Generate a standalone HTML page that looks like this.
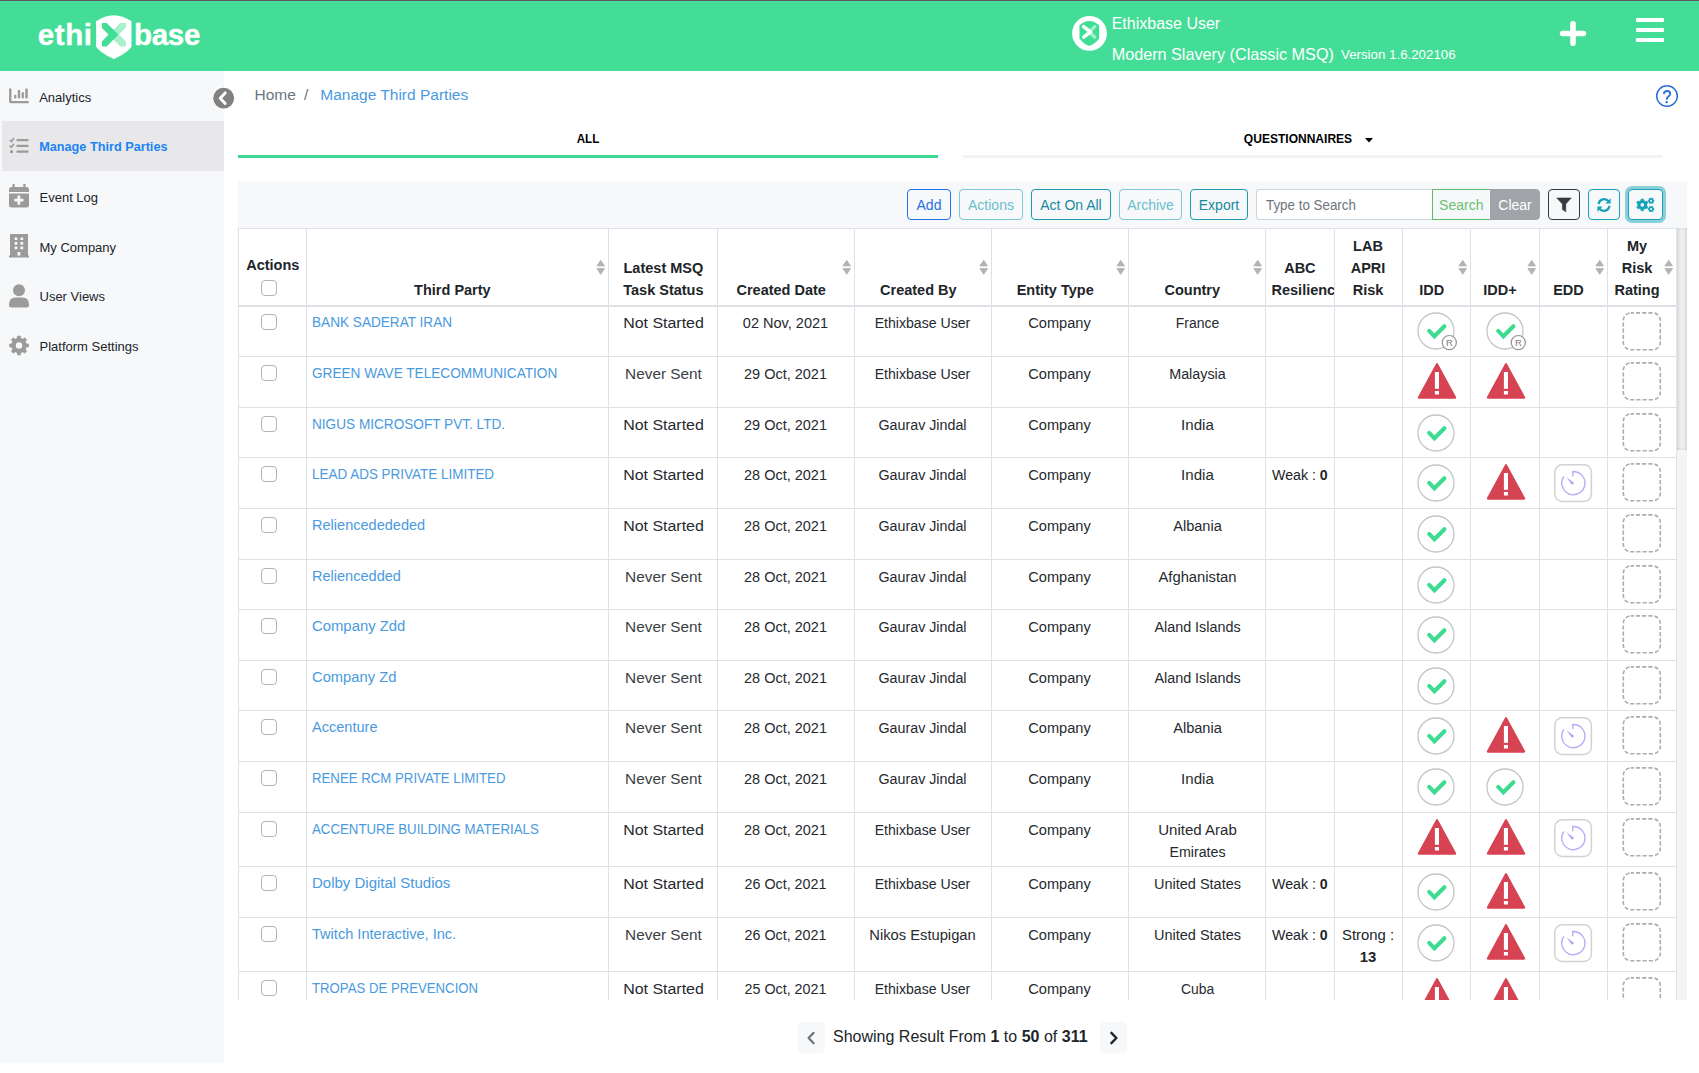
<!DOCTYPE html>
<html><head><meta charset="utf-8"><title>Manage Third Parties</title>
<style>
html,body{margin:0;padding:0;}
body{width:1699px;height:1073px;overflow:hidden;position:relative;background:#fff;font-family:"Liberation Sans", sans-serif;}
.t{position:absolute;white-space:nowrap;}
svg{overflow:visible}
</style></head><body>
<div style="position:absolute;left:0px;top:0px;width:1699px;height:1px;background:#615462"></div>
<div style="position:absolute;left:0px;top:1px;width:1699px;height:70px;background:#44dd97"></div>
<div style="position:absolute;left:0px;top:1px;width:1699px;height:1px;background:#42e59b"></div>
<div class="t" style="left:37.80px;top:14.88px;font-size:29.5px;font-weight:700;color:#fff;line-height:40px;letter-spacing:0.6px;-webkit-text-stroke:0.4px #fff;">ethi</div>
<div class="t" style="left:134.00px;top:14.88px;font-size:29.5px;font-weight:700;color:#fff;line-height:40px;letter-spacing:-0.3px;-webkit-text-stroke:0.4px #fff;">base</div>
<svg style="position:absolute;left:94px;top:12px;" width="40" height="50" viewBox="0 0 40 50">
<path d="M2.1 9.3 Q19.8 -2.7 37.5 9.3 L37.5 34.5 Q35 40 19.8 47.1 Q4.6 40 2.1 34.5 Z" fill="#fff"/>
<path d="M26.3 11 L31.9 11 L31.9 15.4 L24.9 22.6 L31.9 29.4 L31.9 34.5 L26.3 34.5 L14.5 22.6 Z" fill="#a9f0cd"/>
<path d="M7.9 11 L12.6 11 L24.5 22.6 L12.6 34.5 L7.9 34.5 L7.9 29.4 L14.5 22.6 L7.9 15.9 Z" fill="#44dd97"/>
</svg>
<svg style="position:absolute;left:1070px;top:14px;" width="40" height="40" viewBox="0 0 40 40">
<circle cx="19.5" cy="19.4" r="17.4" fill="#fff"/>
<path d="M9.5 11.2 Q19.3 2.6 29.1 11.2 L29.1 24.3 Q26 29.5 19.2 31.9 Q12.4 29.5 9.5 24.3 Z" fill="#3fde95"/>
<path d="M24.8 12.6 L15.2 22 M15.6 14.2 L24.8 23.2" stroke="#a0f0d2" stroke-width="3.3" stroke-linecap="round"/>
<path d="M13.6 12.6 L20.8 18 L13.6 23.2" stroke="#fff" stroke-width="3.3" stroke-linecap="round" stroke-linejoin="round" fill="none"/>
</svg>
<div class="t" style="left:1111.70px;top:12.86px;font-size:16px;font-weight:400;color:#fff;line-height:22px;">Ethixbase User</div>
<div class="t" style="left:1111.70px;top:42.59px;font-size:16.2px;font-weight:400;color:#fff;line-height:22px;">Modern Slavery (Classic MSQ)</div>
<div class="t" style="left:1341.00px;top:43.59px;font-size:13.3px;font-weight:400;color:#fff;line-height:22px;">Version 1.6.202106</div>
<svg style="position:absolute;left:1559px;top:20px;" width="28" height="27" viewBox="0 0 28 27"><path d="M14 3.7 V23.3 M3.6 13.5 H24.4" stroke="#fff" stroke-width="5.6" stroke-linecap="round"/></svg>
<div style="position:absolute;left:1636px;top:18px;width:28px;height:4px;background:#fff;border-radius:1px"></div>
<div style="position:absolute;left:1636px;top:28px;width:28px;height:4px;background:#fff;border-radius:1px"></div>
<div style="position:absolute;left:1636px;top:38px;width:28px;height:4px;background:#fff;border-radius:1px"></div>
<div style="position:absolute;left:0px;top:71px;width:224px;height:992px;background:#f7f8fa"></div>
<div style="position:absolute;left:2px;top:121px;width:222px;height:49.5px;background:#e8e8ea"></div>
<svg style="position:absolute;left:9px;top:88px;" width="21" height="17" viewBox="0 0 21 17">
<path d="M1.25 1.4 V13.6 Q1.25 14.1 1.75 14.1 H18.8" stroke="#9b9b9b" stroke-width="2.4" fill="none" stroke-linecap="round"/>
<rect x="5" y="6.7" width="2.4" height="3.7" rx="1" fill="#9b9b9b"/>
<rect x="8.8" y="1.8" width="2.3" height="8.6" rx="1" fill="#9b9b9b"/>
<rect x="12.6" y="4.1" width="2.3" height="6.3" rx="1" fill="#9b9b9b"/>
<rect x="16.2" y="0.5" width="2.6" height="9.9" rx="1" fill="#9b9b9b"/>
</svg>
<div class="t" style="left:39.20px;top:87.50px;font-size:13px;font-weight:400;color:#212529;line-height:20px;">Analytics</div>
<svg style="position:absolute;left:9px;top:137px;" width="20" height="17" viewBox="0 0 20 17">
<path d="M0.8 3 L2.4 4.6 L5 1.2" stroke="#9b9b9b" stroke-width="1.6" fill="none"/>
<path d="M0.8 8.6 L2.4 10.2 L5 6.8" stroke="#9b9b9b" stroke-width="1.6" fill="none"/>
<circle cx="2.5" cy="14.7" r="1.6" fill="#9b9b9b"/>
<rect x="7.5" y="2" width="12" height="2.2" rx="0.6" fill="#9b9b9b"/>
<rect x="7.5" y="7.8" width="12" height="2.2" rx="0.6" fill="#9b9b9b"/>
<rect x="7.5" y="13.6" width="12" height="2.2" rx="0.6" fill="#9b9b9b"/>
</svg>
<div class="t" style="left:39.20px;top:137.00px;font-size:12.7px;font-weight:700;color:#1c84f2;line-height:20px;">Manage Third Parties</div>
<svg style="position:absolute;left:9px;top:184px;" width="20" height="24" viewBox="0 0 20 24">
<rect x="3.5" y="0" width="2.2" height="4" fill="#9b9b9b"/>
<rect x="14.3" y="0" width="2.2" height="4" fill="#9b9b9b"/>
<path d="M0 5.5 Q0 3 2.5 3 H17.5 Q20 3 20 5.5 V8 H0 Z" fill="#9b9b9b"/>
<path d="M0 9.5 H20 V21 Q20 23.5 17.5 23.5 H2.5 Q0 23.5 0 21 Z" fill="#9b9b9b"/>
<path d="M9.9 11.6 V20.8 M5.3 16.2 H14.5" stroke="#f7f8fa" stroke-width="2.7"/>
</svg>
<div class="t" style="left:39.50px;top:187.50px;font-size:13px;font-weight:400;color:#212529;line-height:20px;">Event Log</div>
<svg style="position:absolute;left:9px;top:234px;" width="20" height="24" viewBox="0 0 20 24">
<path d="M1 0 H19 V21.5 H20 V23.5 H0 V21.5 H1 Z" fill="#9b9b9b"/>
<rect x="5.6" y="3.4" width="2.8" height="2.7" rx="0.5" fill="#f7f8fa"/><rect x="11.4" y="3.4" width="2.8" height="2.7" rx="0.5" fill="#f7f8fa"/>
<rect x="5.6" y="8" width="2.8" height="2.7" rx="0.5" fill="#f7f8fa"/><rect x="11.4" y="8" width="2.8" height="2.7" rx="0.5" fill="#f7f8fa"/>
<rect x="5.6" y="12.5" width="2.8" height="2.7" rx="0.5" fill="#f7f8fa"/><rect x="11.4" y="12.5" width="2.8" height="2.7" rx="0.5" fill="#f7f8fa"/>
<rect x="8.5" y="18" width="2.8" height="3.6" fill="#f7f8fa"/>
</svg>
<div class="t" style="left:39.50px;top:237.50px;font-size:13px;font-weight:400;color:#212529;line-height:20px;">My Company</div>
<svg style="position:absolute;left:9px;top:284px;" width="20" height="24" viewBox="0 0 20 24">
<circle cx="10" cy="6.2" r="6" fill="#9b9b9b"/>
<path d="M0 20.5 Q0 13.5 6.5 13.5 H13.5 Q20 13.5 20 20.5 V21 Q20 23.5 17.5 23.5 H2.5 Q0 23.5 0 21 Z" fill="#9b9b9b"/>
</svg>
<div class="t" style="left:39.50px;top:286.80px;font-size:13px;font-weight:400;color:#212529;line-height:20px;">User Views</div>
<svg style="position:absolute;left:9px;top:335px;" width="21" height="21" viewBox="0 0 21 21"><path d="M17.19 8.74 L19.49 9.08 L19.49 11.92 L17.19 12.26 L16.33 14.34 L17.72 16.21 L15.71 18.22 L13.84 16.83 L11.76 17.69 L11.42 19.99 L8.58 19.99 L8.24 17.69 L6.16 16.83 L4.29 18.22 L2.28 16.21 L3.67 14.34 L2.81 12.26 L0.51 11.92 L0.51 9.08 L2.81 8.74 L3.67 6.66 L2.28 4.79 L4.29 2.78 L6.16 4.17 L8.24 3.31 L8.58 1.01 L11.42 1.01 L11.76 3.31 L13.84 4.17 L15.71 2.78 L17.72 4.79 L16.33 6.66 Z" fill="#9b9b9b" stroke="#9b9b9b" stroke-width="0.6" stroke-linejoin="round"/><circle cx="10" cy="10.5" r="7.252" fill="#9b9b9b"/><circle cx="10" cy="10.5" r="3.2" fill="#f7f8fa"/></svg>
<div class="t" style="left:39.50px;top:337.10px;font-size:13px;font-weight:400;color:#212529;line-height:20px;">Platform Settings</div>
<svg style="position:absolute;left:212.7px;top:86.6px;" width="22" height="22" viewBox="0 0 22 22"><circle cx="10.7" cy="11.2" r="10.4" fill="#818181"/><path d="M12.2 5.9 L7.2 11.2 L12.2 16.5" stroke="#fff" stroke-width="2.9" fill="none" stroke-linecap="round" stroke-linejoin="round"/></svg>
<div class="t" style="left:254.50px;top:84.33px;font-size:15.5px;font-weight:400;color:#6c757d;line-height:22px;">Home</div>
<div class="t" style="left:304.00px;top:84.33px;font-size:15.5px;font-weight:400;color:#6c757d;line-height:22px;">/</div>
<div class="t" style="left:320.30px;top:84.33px;font-size:15.5px;font-weight:400;color:#4a9ae0;line-height:22px;">Manage Third Parties</div>
<svg style="position:absolute;left:1655px;top:84px;" width="24" height="24" viewBox="0 0 24 24"><circle cx="12" cy="12" r="10.3" stroke="#2f6fd6" stroke-width="1.5" fill="none"/><path d="M8.7 10 Q9.2 7 12.2 7 Q15.2 7 15.2 9.7 Q15.2 11.2 13.4 12.5 Q11.6 13.9 11.6 15.8" stroke="#2f6fd6" stroke-width="1.8" fill="none"/><rect x="10.6" y="17.1" width="2.1" height="2.1" fill="#2f6fd6"/></svg>
<div class="t" style="left:538.00px;width:100px;text-align:center;transform:scaleX(0.8552);transform-origin:50% 0;top:128.99px;font-size:13.6px;font-weight:700;color:#000;line-height:20px;">ALL</div>
<div style="position:absolute;left:238px;top:155px;width:700px;height:3px;background:#3dd993"></div>
<div class="t" style="left:1217.50px;width:160px;text-align:center;transform:scaleX(0.8850);transform-origin:50% 0;top:128.99px;font-size:13.6px;font-weight:700;color:#000;line-height:20px;">QUESTIONNAIRES</div>
<svg style="position:absolute;left:1365px;top:137.5px;" width="9" height="5" viewBox="0 0 9 5"><path d="M0 0 H8 L4 4.5 Z" fill="#000"/></svg>
<div style="position:absolute;left:963px;top:155px;width:698.5px;height:3px;background:#f3f3f3"></div>
<div style="position:absolute;left:238px;top:181px;width:1449px;height:47px;background:#f7f8fa"></div>
<div style="position:absolute;left:907px;top:189px;width:44px;height:30.6px;box-sizing:border-box;border:1.3px solid #1c74ec;border-radius:4px;background:transparent;color:#2a70e2;font-size:14px;line-height:30px;text-align:center;">Add</div>
<div style="position:absolute;left:959px;top:189px;width:64px;height:30.6px;box-sizing:border-box;border:1.3px solid #7cc8d3;border-radius:4px;background:transparent;color:#6bbfcb;font-size:14px;line-height:30px;text-align:center;">Actions</div>
<div style="position:absolute;left:1031px;top:189px;width:80px;height:30.6px;box-sizing:border-box;border:1.3px solid #1a9db2;border-radius:4px;background:transparent;color:#178aa0;font-size:14px;line-height:30px;text-align:center;">Act On All</div>
<div style="position:absolute;left:1119px;top:189px;width:63px;height:30.6px;box-sizing:border-box;border:1.3px solid #7cc8d3;border-radius:4px;background:transparent;color:#6bbfcb;font-size:14px;line-height:30px;text-align:center;">Archive</div>
<div style="position:absolute;left:1190px;top:189px;width:58px;height:30.6px;box-sizing:border-box;border:1.3px solid #1a9db2;border-radius:4px;background:transparent;color:#178aa0;font-size:14px;line-height:30px;text-align:center;">Export</div>
<div style="position:absolute;left:1256px;top:189px;width:177px;height:30.6px;box-sizing:border-box;border:1.2px solid #ced4da;border-right:none;border-radius:4px 0 0 4px;background:#fff;color:#6c757d;font-size:14px;line-height:30px;padding-left:9px"><span style="display:inline-block;transform:scaleX(0.955);transform-origin:0 0">Type to Search</span></div>
<div style="position:absolute;left:1432px;top:189px;width:58.5px;height:30.6px;box-sizing:border-box;border:1.3px solid #5cbd6a;border-radius:0;background:transparent;color:#6cc070;font-size:14px;line-height:30px;text-align:center;">Search</div>
<div style="position:absolute;left:1490.4px;top:189px;width:49.3px;height:30.6px;box-sizing:border-box;border:1.3px solid #a0a4a8;border-radius:0 4px 4px 0;background:#a0a4a8;color:#fff;font-size:14px;line-height:30px;text-align:center;">Clear</div>
<div style="position:absolute;left:1548px;top:189px;width:32px;height:30.6px;box-sizing:border-box;border:1.3px solid #343a40;border-radius:4px"></div>
<svg style="position:absolute;left:1556px;top:197px;" width="16" height="16" viewBox="0 0 16 16"><path d="M0.8 1 H15.2 L9.8 7 V14.8 L6.4 12.5 V7 Z" fill="#343a40" stroke="#343a40" stroke-width="0.6" stroke-linejoin="round"/></svg>
<div style="position:absolute;left:1588px;top:189px;width:32px;height:30.6px;box-sizing:border-box;border:1.3px solid #17a2b8;border-radius:4px"></div>
<svg style="position:absolute;left:1596px;top:197px;" width="16" height="16" viewBox="0 0 16 16"><path d="M2.6 7.2 A5.6 5.6 0 0 1 12.6 4.3" stroke="#17a2b8" stroke-width="2.2" fill="none"/><path d="M14.6 1.2 V6.6 H9.4 Z" fill="#17a2b8"/>
<path d="M13.4 8.8 A5.6 5.6 0 0 1 3.4 11.7" stroke="#17a2b8" stroke-width="2.2" fill="none"/><path d="M1.4 14.8 V9.4 H6.6 Z" fill="#17a2b8"/></svg>
<div style="position:absolute;left:1625px;top:186px;width:41px;height:36.8px;box-sizing:border-box;border-radius:7px;background:#8bcfdb"></div>
<div style="position:absolute;left:1628px;top:189px;width:34.5px;height:30.6px;box-sizing:border-box;border:1.3px solid #17a2b8;border-radius:4px;background:#f7f8fa"></div>
<svg style="position:absolute;left:1634px;top:196px;" width="24" height="18" viewBox="0 0 24 18"><g transform="rotate(-90 8.3 8.9)"><path d="M12.69 7.54 L14.20 7.79 L14.20 10.01 L12.69 10.26 L11.67 12.03 L12.21 13.45 L10.29 14.56 L9.32 13.39 L7.28 13.39 L6.31 14.56 L4.39 13.45 L4.93 12.03 L3.91 10.26 L2.40 10.01 L2.40 7.79 L3.91 7.54 L4.93 5.77 L4.39 4.35 L6.31 3.24 L7.28 4.41 L9.32 4.41 L10.29 3.24 L12.21 4.35 L11.67 5.77 Z" fill="#17a2b8" stroke="#17a2b8" stroke-width="0.6" stroke-linejoin="round"/><circle cx="8.3" cy="8.9" r="4.508" fill="#17a2b8"/><circle cx="8.3" cy="8.9" r="1.8" fill="#f7f8fa"/></g><path d="M19.25 3.99 L20.03 4.14 L20.03 5.46 L19.25 5.61 L18.88 6.26 L19.14 7.00 L17.99 7.67 L17.47 7.07 L16.73 7.07 L16.21 7.67 L15.06 7.00 L15.32 6.26 L14.95 5.61 L14.17 5.46 L14.17 4.14 L14.95 3.99 L15.32 3.34 L15.06 2.60 L16.21 1.93 L16.73 2.53 L17.47 2.53 L17.99 1.93 L19.14 2.60 L18.88 3.34 Z" fill="#17a2b8" stroke="#17a2b8" stroke-width="0.6" stroke-linejoin="round"/><circle cx="17.1" cy="4.8" r="2.254" fill="#17a2b8"/><circle cx="17.1" cy="4.8" r="1.0" fill="#f7f8fa"/><path d="M19.25 12.19 L20.03 12.34 L20.03 13.66 L19.25 13.81 L18.88 14.46 L19.14 15.20 L17.99 15.87 L17.47 15.27 L16.73 15.27 L16.21 15.87 L15.06 15.20 L15.32 14.46 L14.95 13.81 L14.17 13.66 L14.17 12.34 L14.95 12.19 L15.32 11.54 L15.06 10.80 L16.21 10.13 L16.73 10.73 L17.47 10.73 L17.99 10.13 L19.14 10.80 L18.88 11.54 Z" fill="#17a2b8" stroke="#17a2b8" stroke-width="0.6" stroke-linejoin="round"/><circle cx="17.1" cy="13.0" r="2.254" fill="#17a2b8"/><circle cx="17.1" cy="13.0" r="1.0" fill="#f7f8fa"/></svg>
<div style="position:absolute;left:238px;top:228px;width:1449px;height:772px;overflow:hidden">
<div style="position:absolute;left:0.00px;top:0.00px;width:1438px;height:772px;background:#fff"></div>
<div style="position:absolute;left:0.00px;top:0.00px;width:1438px;height:1px;background:#dee2e6"></div>
<div style="position:absolute;left:0.00px;top:77.00px;width:1438px;height:2px;background:#dee2e6"></div>
<div style="position:absolute;left:0.00px;top:128.00px;width:1438px;height:1px;background:#dee2e6"></div>
<div style="position:absolute;left:0.00px;top:179.00px;width:1438px;height:1px;background:#dee2e6"></div>
<div style="position:absolute;left:0.00px;top:229.00px;width:1438px;height:1px;background:#dee2e6"></div>
<div style="position:absolute;left:0.00px;top:280.00px;width:1438px;height:1px;background:#dee2e6"></div>
<div style="position:absolute;left:0.00px;top:331.00px;width:1438px;height:1px;background:#dee2e6"></div>
<div style="position:absolute;left:0.00px;top:381.00px;width:1438px;height:1px;background:#dee2e6"></div>
<div style="position:absolute;left:0.00px;top:432.00px;width:1438px;height:1px;background:#dee2e6"></div>
<div style="position:absolute;left:0.00px;top:482.00px;width:1438px;height:1px;background:#dee2e6"></div>
<div style="position:absolute;left:0.00px;top:533.00px;width:1438px;height:1px;background:#dee2e6"></div>
<div style="position:absolute;left:0.00px;top:584.00px;width:1438px;height:1px;background:#dee2e6"></div>
<div style="position:absolute;left:0.00px;top:638.00px;width:1438px;height:1px;background:#dee2e6"></div>
<div style="position:absolute;left:0.00px;top:689.00px;width:1438px;height:1px;background:#dee2e6"></div>
<div style="position:absolute;left:0.00px;top:743.00px;width:1438px;height:1px;background:#dee2e6"></div>
<div style="position:absolute;left:0.00px;top:0.00px;width:1px;height:772px;background:#dee2e6"></div>
<div style="position:absolute;left:68.00px;top:0.00px;width:1px;height:772px;background:#dee2e6"></div>
<div style="position:absolute;left:370.00px;top:0.00px;width:1px;height:772px;background:#dee2e6"></div>
<div style="position:absolute;left:479.00px;top:0.00px;width:1px;height:772px;background:#dee2e6"></div>
<div style="position:absolute;left:616.00px;top:0.00px;width:1px;height:772px;background:#dee2e6"></div>
<div style="position:absolute;left:753.00px;top:0.00px;width:1px;height:772px;background:#dee2e6"></div>
<div style="position:absolute;left:890.00px;top:0.00px;width:1px;height:772px;background:#dee2e6"></div>
<div style="position:absolute;left:1027.00px;top:0.00px;width:1px;height:772px;background:#dee2e6"></div>
<div style="position:absolute;left:1096.00px;top:0.00px;width:1px;height:772px;background:#dee2e6"></div>
<div style="position:absolute;left:1164.00px;top:0.00px;width:1px;height:772px;background:#dee2e6"></div>
<div style="position:absolute;left:1232.00px;top:0.00px;width:1px;height:772px;background:#dee2e6"></div>
<div style="position:absolute;left:1301.00px;top:0.00px;width:1px;height:772px;background:#dee2e6"></div>
<div style="position:absolute;left:1369.00px;top:0.00px;width:1px;height:772px;background:#dee2e6"></div>
<div class="t" style="left:-5.20px;width:80px;text-align:center;top:25.88px;font-size:14.5px;font-weight:700;color:#212529;line-height:22px;">Actions</div>
<div style="position:absolute;left:23.00px;top:52.00px;width:16px;height:16px;box-sizing:border-box;border:1.2px solid #adb5bd;border-radius:4px;background:#fff"></div>
<div class="t" style="left:114.40px;width:200px;text-align:center;top:50.58px;font-size:14.5px;font-weight:700;color:#212529;line-height:22px;">Third Party</div>
<div class="t" style="left:370.90px;width:109px;text-align:center;top:28.78px;font-size:14.5px;font-weight:700;color:#212529;line-height:22px;">Latest MSQ</div>
<div class="t" style="left:370.90px;width:109px;text-align:center;top:50.58px;font-size:14.5px;font-weight:700;color:#212529;line-height:22px;">Task Status</div>
<div class="t" style="left:474.70px;width:137px;text-align:center;top:50.58px;font-size:14.5px;font-weight:700;color:#212529;line-height:22px;">Created Date</div>
<div class="t" style="left:611.80px;width:137px;text-align:center;top:50.58px;font-size:14.5px;font-weight:700;color:#212529;line-height:22px;">Created By</div>
<div class="t" style="left:748.70px;width:137px;text-align:center;top:50.58px;font-size:14.5px;font-weight:700;color:#212529;line-height:22px;">Entity Type</div>
<div class="t" style="left:885.80px;width:137px;text-align:center;top:50.58px;font-size:14.5px;font-weight:700;color:#212529;line-height:22px;">Country</div>
<div class="t" style="left:1027.40px;width:69px;text-align:center;top:28.78px;font-size:14.5px;font-weight:700;color:#212529;line-height:22px;">ABC</div>
<div style="position:absolute;left:1028px;top:50.58px;width:68px;overflow:hidden;white-space:nowrap;font-size:14.5px;font-weight:700;color:#212529;line-height:22px;padding-left:5.5px;box-sizing:border-box">Resilience</div>
<div class="t" style="left:1096.00px;width:68px;text-align:center;top:6.78px;font-size:14.5px;font-weight:700;color:#212529;line-height:22px;">LAB</div>
<div class="t" style="left:1096.00px;width:68px;text-align:center;top:28.78px;font-size:14.5px;font-weight:700;color:#212529;line-height:22px;">APRI</div>
<div class="t" style="left:1096.00px;width:68px;text-align:center;top:50.58px;font-size:14.5px;font-weight:700;color:#212529;line-height:22px;">Risk</div>
<div class="t" style="left:1159.80px;width:68px;text-align:center;top:50.58px;font-size:14.5px;font-weight:700;color:#212529;line-height:22px;">IDD</div>
<div class="t" style="left:1228.00px;width:68px;text-align:center;top:50.58px;font-size:14.5px;font-weight:700;color:#212529;line-height:22px;">IDD+</div>
<div class="t" style="left:1296.50px;width:68px;text-align:center;top:50.58px;font-size:14.5px;font-weight:700;color:#212529;line-height:22px;">EDD</div>
<div class="t" style="left:1365.00px;width:68px;text-align:center;top:6.78px;font-size:14.5px;font-weight:700;color:#212529;line-height:22px;">My</div>
<div class="t" style="left:1365.00px;width:68px;text-align:center;top:28.78px;font-size:14.5px;font-weight:700;color:#212529;line-height:22px;">Risk</div>
<div class="t" style="left:1365.00px;width:68px;text-align:center;top:50.58px;font-size:14.5px;font-weight:700;color:#212529;line-height:22px;">Rating</div>
<svg style="position:absolute;left:357.60px;top:31.90px;" width="10" height="15" viewBox="0 0 10 15"><path d="M0.9 5.9 L4.7 0.3 L8.5 5.9 Z" fill="#b3b3b3" stroke="#b3b3b3" stroke-width="0.9" stroke-linejoin="round"/><path d="M0.9 8.6 L8.5 8.6 L4.7 14.3 Z" fill="#b3b3b3" stroke="#b3b3b3" stroke-width="0.9" stroke-linejoin="round"/></svg>
<svg style="position:absolute;left:603.60px;top:31.90px;" width="10" height="15" viewBox="0 0 10 15"><path d="M0.9 5.9 L4.7 0.3 L8.5 5.9 Z" fill="#b3b3b3" stroke="#b3b3b3" stroke-width="0.9" stroke-linejoin="round"/><path d="M0.9 8.6 L8.5 8.6 L4.7 14.3 Z" fill="#b3b3b3" stroke="#b3b3b3" stroke-width="0.9" stroke-linejoin="round"/></svg>
<svg style="position:absolute;left:740.60px;top:31.90px;" width="10" height="15" viewBox="0 0 10 15"><path d="M0.9 5.9 L4.7 0.3 L8.5 5.9 Z" fill="#b3b3b3" stroke="#b3b3b3" stroke-width="0.9" stroke-linejoin="round"/><path d="M0.9 8.6 L8.5 8.6 L4.7 14.3 Z" fill="#b3b3b3" stroke="#b3b3b3" stroke-width="0.9" stroke-linejoin="round"/></svg>
<svg style="position:absolute;left:877.60px;top:31.90px;" width="10" height="15" viewBox="0 0 10 15"><path d="M0.9 5.9 L4.7 0.3 L8.5 5.9 Z" fill="#b3b3b3" stroke="#b3b3b3" stroke-width="0.9" stroke-linejoin="round"/><path d="M0.9 8.6 L8.5 8.6 L4.7 14.3 Z" fill="#b3b3b3" stroke="#b3b3b3" stroke-width="0.9" stroke-linejoin="round"/></svg>
<svg style="position:absolute;left:1014.60px;top:31.90px;" width="10" height="15" viewBox="0 0 10 15"><path d="M0.9 5.9 L4.7 0.3 L8.5 5.9 Z" fill="#b3b3b3" stroke="#b3b3b3" stroke-width="0.9" stroke-linejoin="round"/><path d="M0.9 8.6 L8.5 8.6 L4.7 14.3 Z" fill="#b3b3b3" stroke="#b3b3b3" stroke-width="0.9" stroke-linejoin="round"/></svg>
<svg style="position:absolute;left:1219.60px;top:31.90px;" width="10" height="15" viewBox="0 0 10 15"><path d="M0.9 5.9 L4.7 0.3 L8.5 5.9 Z" fill="#b3b3b3" stroke="#b3b3b3" stroke-width="0.9" stroke-linejoin="round"/><path d="M0.9 8.6 L8.5 8.6 L4.7 14.3 Z" fill="#b3b3b3" stroke="#b3b3b3" stroke-width="0.9" stroke-linejoin="round"/></svg>
<svg style="position:absolute;left:1288.60px;top:31.90px;" width="10" height="15" viewBox="0 0 10 15"><path d="M0.9 5.9 L4.7 0.3 L8.5 5.9 Z" fill="#b3b3b3" stroke="#b3b3b3" stroke-width="0.9" stroke-linejoin="round"/><path d="M0.9 8.6 L8.5 8.6 L4.7 14.3 Z" fill="#b3b3b3" stroke="#b3b3b3" stroke-width="0.9" stroke-linejoin="round"/></svg>
<svg style="position:absolute;left:1356.60px;top:31.90px;" width="10" height="15" viewBox="0 0 10 15"><path d="M0.9 5.9 L4.7 0.3 L8.5 5.9 Z" fill="#b3b3b3" stroke="#b3b3b3" stroke-width="0.9" stroke-linejoin="round"/><path d="M0.9 8.6 L8.5 8.6 L4.7 14.3 Z" fill="#b3b3b3" stroke="#b3b3b3" stroke-width="0.9" stroke-linejoin="round"/></svg>
<svg style="position:absolute;left:1425.60px;top:31.90px;" width="10" height="15" viewBox="0 0 10 15"><path d="M0.9 5.9 L4.7 0.3 L8.5 5.9 Z" fill="#b3b3b3" stroke="#b3b3b3" stroke-width="0.9" stroke-linejoin="round"/><path d="M0.9 8.6 L8.5 8.6 L4.7 14.3 Z" fill="#b3b3b3" stroke="#b3b3b3" stroke-width="0.9" stroke-linejoin="round"/></svg>
<div style="position:absolute;left:23.00px;top:86.30px;width:16px;height:16px;box-sizing:border-box;border:1.2px solid #adb5bd;border-radius:4px;background:#fff"></div>
<div class="t" style="left:74.30px;transform:scaleX(0.8774);transform-origin:0 0;top:83.23px;font-size:15.5px;font-weight:400;color:#4a9ae0;line-height:22px;">BANK SADERAT IRAN</div>
<div class="t" style="left:370.80px;width:109px;text-align:center;transform:scaleX(1.0289);transform-origin:50% 0;top:84.23px;font-size:15.5px;font-weight:400;color:#262a2f;line-height:22px;">Not Started</div>
<div class="t" style="left:479.40px;width:137px;text-align:center;transform:scaleX(0.9373);transform-origin:50% 0;top:84.23px;font-size:15.5px;font-weight:400;color:#262a2f;line-height:22px;">02 Nov, 2021</div>
<div class="t" style="left:616.00px;width:137px;text-align:center;transform:scaleX(0.9100);transform-origin:50% 0;top:84.23px;font-size:15.5px;font-weight:400;color:#262a2f;line-height:22px;">Ethixbase User</div>
<div class="t" style="left:753.00px;width:137px;text-align:center;transform:scaleX(0.9420);transform-origin:50% 0;top:84.23px;font-size:15.5px;font-weight:400;color:#262a2f;line-height:22px;">Company</div>
<div class="t" style="left:890.50px;width:137px;text-align:center;transform:scaleX(0.9012);transform-origin:50% 0;top:84.23px;font-size:15.5px;font-weight:400;color:#262a2f;line-height:22px;">France</div>
<svg style="position:absolute;left:1179.30px;top:84.40px;" width="40" height="40" viewBox="0 0 40 40"><circle cx="19" cy="19" r="18" fill="#fff" stroke="#c6c6c6" stroke-width="1.3"/><path d="M12.2 18.9 L17.4 24.3 L27.4 14.2" stroke="#3ddc91" stroke-width="4.1" fill="none" stroke-linecap="round" stroke-linejoin="miter"/><circle cx="32.3" cy="30.6" r="7.1" fill="#fff" stroke="#939393" stroke-width="1.2"/><text x="32.4" y="34" font-size="9.5" font-family="Liberation Sans" text-anchor="middle" fill="#7c7c7c">R</text></svg>
<svg style="position:absolute;left:1247.60px;top:84.40px;" width="40" height="40" viewBox="0 0 40 40"><circle cx="19" cy="19" r="18" fill="#fff" stroke="#c6c6c6" stroke-width="1.3"/><path d="M12.2 18.9 L17.4 24.3 L27.4 14.2" stroke="#3ddc91" stroke-width="4.1" fill="none" stroke-linecap="round" stroke-linejoin="miter"/><circle cx="32.3" cy="30.6" r="7.1" fill="#fff" stroke="#939393" stroke-width="1.2"/><text x="32.4" y="34" font-size="9.5" font-family="Liberation Sans" text-anchor="middle" fill="#7c7c7c">R</text></svg>
<svg style="position:absolute;left:1384.40px;top:83.60px;" width="40" height="40" viewBox="0 0 40 40"><rect x="1.3" y="0.9" width="37.0" height="36.9" rx="7.5" fill="none" stroke="#acacac" stroke-width="1.6" stroke-dasharray="4.1 2.1" stroke-dashoffset="1"/></svg>
<div style="position:absolute;left:23.00px;top:137.00px;width:16px;height:16px;box-sizing:border-box;border:1.2px solid #adb5bd;border-radius:4px;background:#fff"></div>
<div class="t" style="left:74.30px;transform:scaleX(0.8781);transform-origin:0 0;top:133.93px;font-size:15.5px;font-weight:400;color:#4a9ae0;line-height:22px;">GREEN WAVE TELECOMMUNICATION</div>
<div class="t" style="left:370.80px;width:109px;text-align:center;transform:scaleX(0.9901);transform-origin:50% 0;top:134.93px;font-size:15.5px;font-weight:400;color:#3a3f44;line-height:22px;">Never Sent</div>
<div class="t" style="left:479.40px;width:137px;text-align:center;transform:scaleX(0.9346);transform-origin:50% 0;top:134.93px;font-size:15.5px;font-weight:400;color:#262a2f;line-height:22px;">29 Oct, 2021</div>
<div class="t" style="left:616.00px;width:137px;text-align:center;transform:scaleX(0.9100);transform-origin:50% 0;top:134.93px;font-size:15.5px;font-weight:400;color:#262a2f;line-height:22px;">Ethixbase User</div>
<div class="t" style="left:753.00px;width:137px;text-align:center;transform:scaleX(0.9420);transform-origin:50% 0;top:134.93px;font-size:15.5px;font-weight:400;color:#262a2f;line-height:22px;">Company</div>
<div class="t" style="left:890.50px;width:137px;text-align:center;transform:scaleX(0.9245);transform-origin:50% 0;top:134.93px;font-size:15.5px;font-weight:400;color:#262a2f;line-height:22px;">Malaysia</div>
<svg style="position:absolute;left:1180.30px;top:133.60px;" width="38" height="37" viewBox="0 0 38 37"><path d="M19 2.2 L37.1 35.6 H0.9 Z" fill="#d64352" stroke="#d64352" stroke-width="2.2" stroke-linejoin="round"/><rect x="16.9" y="10" width="4.1" height="16.8" fill="#fff"/><rect x="16.9" y="29" width="4.1" height="3.5" fill="#fff"/></svg>
<svg style="position:absolute;left:1248.60px;top:133.60px;" width="38" height="37" viewBox="0 0 38 37"><path d="M19 2.2 L37.1 35.6 H0.9 Z" fill="#d64352" stroke="#d64352" stroke-width="2.2" stroke-linejoin="round"/><rect x="16.9" y="10" width="4.1" height="16.8" fill="#fff"/><rect x="16.9" y="29" width="4.1" height="3.5" fill="#fff"/></svg>
<svg style="position:absolute;left:1384.40px;top:134.30px;" width="40" height="40" viewBox="0 0 40 40"><rect x="1.3" y="0.9" width="37.0" height="36.9" rx="7.5" fill="none" stroke="#acacac" stroke-width="1.6" stroke-dasharray="4.1 2.1" stroke-dashoffset="1"/></svg>
<div style="position:absolute;left:23.00px;top:188.00px;width:16px;height:16px;box-sizing:border-box;border:1.2px solid #adb5bd;border-radius:4px;background:#fff"></div>
<div class="t" style="left:74.30px;transform:scaleX(0.8780);transform-origin:0 0;top:184.93px;font-size:15.5px;font-weight:400;color:#4a9ae0;line-height:22px;">NIGUS MICROSOFT PVT. LTD.</div>
<div class="t" style="left:370.80px;width:109px;text-align:center;transform:scaleX(1.0289);transform-origin:50% 0;top:185.93px;font-size:15.5px;font-weight:400;color:#262a2f;line-height:22px;">Not Started</div>
<div class="t" style="left:479.40px;width:137px;text-align:center;transform:scaleX(0.9346);transform-origin:50% 0;top:185.93px;font-size:15.5px;font-weight:400;color:#262a2f;line-height:22px;">29 Oct, 2021</div>
<div class="t" style="left:616.00px;width:137px;text-align:center;transform:scaleX(0.9207);transform-origin:50% 0;top:185.93px;font-size:15.5px;font-weight:400;color:#262a2f;line-height:22px;">Gaurav Jindal</div>
<div class="t" style="left:753.00px;width:137px;text-align:center;transform:scaleX(0.9420);transform-origin:50% 0;top:185.93px;font-size:15.5px;font-weight:400;color:#262a2f;line-height:22px;">Company</div>
<div class="t" style="left:890.50px;width:137px;text-align:center;transform:scaleX(0.9746);transform-origin:50% 0;top:185.93px;font-size:15.5px;font-weight:400;color:#262a2f;line-height:22px;">India</div>
<svg style="position:absolute;left:1179.30px;top:186.10px;" width="40" height="40" viewBox="0 0 40 40"><circle cx="19" cy="19" r="18" fill="#fff" stroke="#c6c6c6" stroke-width="1.3"/><path d="M12.2 18.9 L17.4 24.3 L27.4 14.2" stroke="#3ddc91" stroke-width="4.1" fill="none" stroke-linecap="round" stroke-linejoin="miter"/></svg>
<svg style="position:absolute;left:1384.40px;top:185.30px;" width="40" height="40" viewBox="0 0 40 40"><rect x="1.3" y="0.9" width="37.0" height="36.9" rx="7.5" fill="none" stroke="#acacac" stroke-width="1.6" stroke-dasharray="4.1 2.1" stroke-dashoffset="1"/></svg>
<div style="position:absolute;left:23.00px;top:238.00px;width:16px;height:16px;box-sizing:border-box;border:1.2px solid #adb5bd;border-radius:4px;background:#fff"></div>
<div class="t" style="left:74.30px;transform:scaleX(0.8688);transform-origin:0 0;top:234.93px;font-size:15.5px;font-weight:400;color:#4a9ae0;line-height:22px;">LEAD ADS PRIVATE LIMITED</div>
<div class="t" style="left:370.80px;width:109px;text-align:center;transform:scaleX(1.0289);transform-origin:50% 0;top:235.93px;font-size:15.5px;font-weight:400;color:#262a2f;line-height:22px;">Not Started</div>
<div class="t" style="left:479.40px;width:137px;text-align:center;transform:scaleX(0.9346);transform-origin:50% 0;top:235.93px;font-size:15.5px;font-weight:400;color:#262a2f;line-height:22px;">28 Oct, 2021</div>
<div class="t" style="left:616.00px;width:137px;text-align:center;transform:scaleX(0.9207);transform-origin:50% 0;top:235.93px;font-size:15.5px;font-weight:400;color:#262a2f;line-height:22px;">Gaurav Jindal</div>
<div class="t" style="left:753.00px;width:137px;text-align:center;transform:scaleX(0.9420);transform-origin:50% 0;top:235.93px;font-size:15.5px;font-weight:400;color:#262a2f;line-height:22px;">Company</div>
<div class="t" style="left:890.50px;width:137px;text-align:center;transform:scaleX(0.9746);transform-origin:50% 0;top:235.93px;font-size:15.5px;font-weight:400;color:#262a2f;line-height:22px;">India</div>
<div class="t" style="left:1033.70px;transform:scaleX(0.9148);transform-origin:0 0;top:235.93px;font-size:15.5px;font-weight:400;color:#212529;line-height:22px;">Weak : <b>0</b></div>
<svg style="position:absolute;left:1179.30px;top:236.10px;" width="40" height="40" viewBox="0 0 40 40"><circle cx="19" cy="19" r="18" fill="#fff" stroke="#c6c6c6" stroke-width="1.3"/><path d="M12.2 18.9 L17.4 24.3 L27.4 14.2" stroke="#3ddc91" stroke-width="4.1" fill="none" stroke-linecap="round" stroke-linejoin="miter"/></svg>
<svg style="position:absolute;left:1248.60px;top:234.60px;" width="38" height="37" viewBox="0 0 38 37"><path d="M19 2.2 L37.1 35.6 H0.9 Z" fill="#d64352" stroke="#d64352" stroke-width="2.2" stroke-linejoin="round"/><rect x="16.9" y="10" width="4.1" height="16.8" fill="#fff"/><rect x="16.9" y="29" width="4.1" height="3.5" fill="#fff"/></svg>
<svg style="position:absolute;left:1316.20px;top:235.60px;" width="39" height="39" viewBox="0 0 39 39"><rect x="0.8" y="0.8" width="36.6" height="36.6" rx="7.5" fill="#fff" stroke="#d2d2d2" stroke-width="1.5"/><g transform="translate(-0.8 -0.3)"><path d="M10.6 12.8 A11.6 11.6 0 1 0 19.6 7.8 V12.5" stroke="#b3b0f7" stroke-width="1.4" fill="none"/><path d="M13.2 13.6 L20.7 19.0 Q20.3 21.3 18.5 20.7 Z" fill="#aaa6f6"/></g></svg>
<svg style="position:absolute;left:1384.40px;top:235.30px;" width="40" height="40" viewBox="0 0 40 40"><rect x="1.3" y="0.9" width="37.0" height="36.9" rx="7.5" fill="none" stroke="#acacac" stroke-width="1.6" stroke-dasharray="4.1 2.1" stroke-dashoffset="1"/></svg>
<div style="position:absolute;left:23.00px;top:289.00px;width:16px;height:16px;box-sizing:border-box;border:1.2px solid #adb5bd;border-radius:4px;background:#fff"></div>
<div class="t" style="left:74.30px;transform:scaleX(0.9383);transform-origin:0 0;top:285.93px;font-size:15.5px;font-weight:400;color:#4a9ae0;line-height:22px;">Reliencedededed</div>
<div class="t" style="left:370.80px;width:109px;text-align:center;transform:scaleX(1.0289);transform-origin:50% 0;top:286.93px;font-size:15.5px;font-weight:400;color:#262a2f;line-height:22px;">Not Started</div>
<div class="t" style="left:479.40px;width:137px;text-align:center;transform:scaleX(0.9346);transform-origin:50% 0;top:286.93px;font-size:15.5px;font-weight:400;color:#262a2f;line-height:22px;">28 Oct, 2021</div>
<div class="t" style="left:616.00px;width:137px;text-align:center;transform:scaleX(0.9207);transform-origin:50% 0;top:286.93px;font-size:15.5px;font-weight:400;color:#262a2f;line-height:22px;">Gaurav Jindal</div>
<div class="t" style="left:753.00px;width:137px;text-align:center;transform:scaleX(0.9420);transform-origin:50% 0;top:286.93px;font-size:15.5px;font-weight:400;color:#262a2f;line-height:22px;">Company</div>
<div class="t" style="left:890.50px;width:137px;text-align:center;transform:scaleX(0.9418);transform-origin:50% 0;top:286.93px;font-size:15.5px;font-weight:400;color:#262a2f;line-height:22px;">Albania</div>
<svg style="position:absolute;left:1179.30px;top:287.10px;" width="40" height="40" viewBox="0 0 40 40"><circle cx="19" cy="19" r="18" fill="#fff" stroke="#c6c6c6" stroke-width="1.3"/><path d="M12.2 18.9 L17.4 24.3 L27.4 14.2" stroke="#3ddc91" stroke-width="4.1" fill="none" stroke-linecap="round" stroke-linejoin="miter"/></svg>
<svg style="position:absolute;left:1384.40px;top:286.30px;" width="40" height="40" viewBox="0 0 40 40"><rect x="1.3" y="0.9" width="37.0" height="36.9" rx="7.5" fill="none" stroke="#acacac" stroke-width="1.6" stroke-dasharray="4.1 2.1" stroke-dashoffset="1"/></svg>
<div style="position:absolute;left:23.00px;top:340.00px;width:16px;height:16px;box-sizing:border-box;border:1.2px solid #adb5bd;border-radius:4px;background:#fff"></div>
<div class="t" style="left:74.30px;transform:scaleX(0.9378);transform-origin:0 0;top:336.93px;font-size:15.5px;font-weight:400;color:#4a9ae0;line-height:22px;">Reliencedded</div>
<div class="t" style="left:370.80px;width:109px;text-align:center;transform:scaleX(0.9901);transform-origin:50% 0;top:337.93px;font-size:15.5px;font-weight:400;color:#3a3f44;line-height:22px;">Never Sent</div>
<div class="t" style="left:479.40px;width:137px;text-align:center;transform:scaleX(0.9346);transform-origin:50% 0;top:337.93px;font-size:15.5px;font-weight:400;color:#262a2f;line-height:22px;">28 Oct, 2021</div>
<div class="t" style="left:616.00px;width:137px;text-align:center;transform:scaleX(0.9207);transform-origin:50% 0;top:337.93px;font-size:15.5px;font-weight:400;color:#262a2f;line-height:22px;">Gaurav Jindal</div>
<div class="t" style="left:753.00px;width:137px;text-align:center;transform:scaleX(0.9420);transform-origin:50% 0;top:337.93px;font-size:15.5px;font-weight:400;color:#262a2f;line-height:22px;">Company</div>
<div class="t" style="left:890.50px;width:137px;text-align:center;transform:scaleX(0.9544);transform-origin:50% 0;top:337.93px;font-size:15.5px;font-weight:400;color:#262a2f;line-height:22px;">Afghanistan</div>
<svg style="position:absolute;left:1179.30px;top:338.10px;" width="40" height="40" viewBox="0 0 40 40"><circle cx="19" cy="19" r="18" fill="#fff" stroke="#c6c6c6" stroke-width="1.3"/><path d="M12.2 18.9 L17.4 24.3 L27.4 14.2" stroke="#3ddc91" stroke-width="4.1" fill="none" stroke-linecap="round" stroke-linejoin="miter"/></svg>
<svg style="position:absolute;left:1384.40px;top:337.30px;" width="40" height="40" viewBox="0 0 40 40"><rect x="1.3" y="0.9" width="37.0" height="36.9" rx="7.5" fill="none" stroke="#acacac" stroke-width="1.6" stroke-dasharray="4.1 2.1" stroke-dashoffset="1"/></svg>
<div style="position:absolute;left:23.00px;top:390.00px;width:16px;height:16px;box-sizing:border-box;border:1.2px solid #adb5bd;border-radius:4px;background:#fff"></div>
<div class="t" style="left:74.30px;transform:scaleX(0.9584);transform-origin:0 0;top:386.93px;font-size:15.5px;font-weight:400;color:#4a9ae0;line-height:22px;">Company Zdd</div>
<div class="t" style="left:370.80px;width:109px;text-align:center;transform:scaleX(0.9901);transform-origin:50% 0;top:387.93px;font-size:15.5px;font-weight:400;color:#3a3f44;line-height:22px;">Never Sent</div>
<div class="t" style="left:479.40px;width:137px;text-align:center;transform:scaleX(0.9346);transform-origin:50% 0;top:387.93px;font-size:15.5px;font-weight:400;color:#262a2f;line-height:22px;">28 Oct, 2021</div>
<div class="t" style="left:616.00px;width:137px;text-align:center;transform:scaleX(0.9207);transform-origin:50% 0;top:387.93px;font-size:15.5px;font-weight:400;color:#262a2f;line-height:22px;">Gaurav Jindal</div>
<div class="t" style="left:753.00px;width:137px;text-align:center;transform:scaleX(0.9420);transform-origin:50% 0;top:387.93px;font-size:15.5px;font-weight:400;color:#262a2f;line-height:22px;">Company</div>
<div class="t" style="left:890.50px;width:137px;text-align:center;transform:scaleX(0.9266);transform-origin:50% 0;top:387.93px;font-size:15.5px;font-weight:400;color:#262a2f;line-height:22px;">Aland Islands</div>
<svg style="position:absolute;left:1179.30px;top:388.10px;" width="40" height="40" viewBox="0 0 40 40"><circle cx="19" cy="19" r="18" fill="#fff" stroke="#c6c6c6" stroke-width="1.3"/><path d="M12.2 18.9 L17.4 24.3 L27.4 14.2" stroke="#3ddc91" stroke-width="4.1" fill="none" stroke-linecap="round" stroke-linejoin="miter"/></svg>
<svg style="position:absolute;left:1384.40px;top:387.30px;" width="40" height="40" viewBox="0 0 40 40"><rect x="1.3" y="0.9" width="37.0" height="36.9" rx="7.5" fill="none" stroke="#acacac" stroke-width="1.6" stroke-dasharray="4.1 2.1" stroke-dashoffset="1"/></svg>
<div style="position:absolute;left:23.00px;top:441.00px;width:16px;height:16px;box-sizing:border-box;border:1.2px solid #adb5bd;border-radius:4px;background:#fff"></div>
<div class="t" style="left:74.30px;transform:scaleX(0.9504);transform-origin:0 0;top:437.93px;font-size:15.5px;font-weight:400;color:#4a9ae0;line-height:22px;">Company Zd</div>
<div class="t" style="left:370.80px;width:109px;text-align:center;transform:scaleX(0.9901);transform-origin:50% 0;top:438.93px;font-size:15.5px;font-weight:400;color:#3a3f44;line-height:22px;">Never Sent</div>
<div class="t" style="left:479.40px;width:137px;text-align:center;transform:scaleX(0.9346);transform-origin:50% 0;top:438.93px;font-size:15.5px;font-weight:400;color:#262a2f;line-height:22px;">28 Oct, 2021</div>
<div class="t" style="left:616.00px;width:137px;text-align:center;transform:scaleX(0.9207);transform-origin:50% 0;top:438.93px;font-size:15.5px;font-weight:400;color:#262a2f;line-height:22px;">Gaurav Jindal</div>
<div class="t" style="left:753.00px;width:137px;text-align:center;transform:scaleX(0.9420);transform-origin:50% 0;top:438.93px;font-size:15.5px;font-weight:400;color:#262a2f;line-height:22px;">Company</div>
<div class="t" style="left:890.50px;width:137px;text-align:center;transform:scaleX(0.9266);transform-origin:50% 0;top:438.93px;font-size:15.5px;font-weight:400;color:#262a2f;line-height:22px;">Aland Islands</div>
<svg style="position:absolute;left:1179.30px;top:439.10px;" width="40" height="40" viewBox="0 0 40 40"><circle cx="19" cy="19" r="18" fill="#fff" stroke="#c6c6c6" stroke-width="1.3"/><path d="M12.2 18.9 L17.4 24.3 L27.4 14.2" stroke="#3ddc91" stroke-width="4.1" fill="none" stroke-linecap="round" stroke-linejoin="miter"/></svg>
<svg style="position:absolute;left:1384.40px;top:438.30px;" width="40" height="40" viewBox="0 0 40 40"><rect x="1.3" y="0.9" width="37.0" height="36.9" rx="7.5" fill="none" stroke="#acacac" stroke-width="1.6" stroke-dasharray="4.1 2.1" stroke-dashoffset="1"/></svg>
<div style="position:absolute;left:23.00px;top:491.00px;width:16px;height:16px;box-sizing:border-box;border:1.2px solid #adb5bd;border-radius:4px;background:#fff"></div>
<div class="t" style="left:74.30px;transform:scaleX(0.9390);transform-origin:0 0;top:487.93px;font-size:15.5px;font-weight:400;color:#4a9ae0;line-height:22px;">Accenture</div>
<div class="t" style="left:370.80px;width:109px;text-align:center;transform:scaleX(0.9901);transform-origin:50% 0;top:488.93px;font-size:15.5px;font-weight:400;color:#3a3f44;line-height:22px;">Never Sent</div>
<div class="t" style="left:479.40px;width:137px;text-align:center;transform:scaleX(0.9346);transform-origin:50% 0;top:488.93px;font-size:15.5px;font-weight:400;color:#262a2f;line-height:22px;">28 Oct, 2021</div>
<div class="t" style="left:616.00px;width:137px;text-align:center;transform:scaleX(0.9207);transform-origin:50% 0;top:488.93px;font-size:15.5px;font-weight:400;color:#262a2f;line-height:22px;">Gaurav Jindal</div>
<div class="t" style="left:753.00px;width:137px;text-align:center;transform:scaleX(0.9420);transform-origin:50% 0;top:488.93px;font-size:15.5px;font-weight:400;color:#262a2f;line-height:22px;">Company</div>
<div class="t" style="left:890.50px;width:137px;text-align:center;transform:scaleX(0.9418);transform-origin:50% 0;top:488.93px;font-size:15.5px;font-weight:400;color:#262a2f;line-height:22px;">Albania</div>
<svg style="position:absolute;left:1179.30px;top:489.10px;" width="40" height="40" viewBox="0 0 40 40"><circle cx="19" cy="19" r="18" fill="#fff" stroke="#c6c6c6" stroke-width="1.3"/><path d="M12.2 18.9 L17.4 24.3 L27.4 14.2" stroke="#3ddc91" stroke-width="4.1" fill="none" stroke-linecap="round" stroke-linejoin="miter"/></svg>
<svg style="position:absolute;left:1248.60px;top:487.60px;" width="38" height="37" viewBox="0 0 38 37"><path d="M19 2.2 L37.1 35.6 H0.9 Z" fill="#d64352" stroke="#d64352" stroke-width="2.2" stroke-linejoin="round"/><rect x="16.9" y="10" width="4.1" height="16.8" fill="#fff"/><rect x="16.9" y="29" width="4.1" height="3.5" fill="#fff"/></svg>
<svg style="position:absolute;left:1316.20px;top:488.60px;" width="39" height="39" viewBox="0 0 39 39"><rect x="0.8" y="0.8" width="36.6" height="36.6" rx="7.5" fill="#fff" stroke="#d2d2d2" stroke-width="1.5"/><g transform="translate(-0.8 -0.3)"><path d="M10.6 12.8 A11.6 11.6 0 1 0 19.6 7.8 V12.5" stroke="#b3b0f7" stroke-width="1.4" fill="none"/><path d="M13.2 13.6 L20.7 19.0 Q20.3 21.3 18.5 20.7 Z" fill="#aaa6f6"/></g></svg>
<svg style="position:absolute;left:1384.40px;top:488.30px;" width="40" height="40" viewBox="0 0 40 40"><rect x="1.3" y="0.9" width="37.0" height="36.9" rx="7.5" fill="none" stroke="#acacac" stroke-width="1.6" stroke-dasharray="4.1 2.1" stroke-dashoffset="1"/></svg>
<div style="position:absolute;left:23.00px;top:542.00px;width:16px;height:16px;box-sizing:border-box;border:1.2px solid #adb5bd;border-radius:4px;background:#fff"></div>
<div class="t" style="left:74.30px;transform:scaleX(0.8532);transform-origin:0 0;top:538.93px;font-size:15.5px;font-weight:400;color:#4a9ae0;line-height:22px;">RENEE RCM PRIVATE LIMITED</div>
<div class="t" style="left:370.80px;width:109px;text-align:center;transform:scaleX(0.9901);transform-origin:50% 0;top:539.93px;font-size:15.5px;font-weight:400;color:#3a3f44;line-height:22px;">Never Sent</div>
<div class="t" style="left:479.40px;width:137px;text-align:center;transform:scaleX(0.9346);transform-origin:50% 0;top:539.93px;font-size:15.5px;font-weight:400;color:#262a2f;line-height:22px;">28 Oct, 2021</div>
<div class="t" style="left:616.00px;width:137px;text-align:center;transform:scaleX(0.9207);transform-origin:50% 0;top:539.93px;font-size:15.5px;font-weight:400;color:#262a2f;line-height:22px;">Gaurav Jindal</div>
<div class="t" style="left:753.00px;width:137px;text-align:center;transform:scaleX(0.9420);transform-origin:50% 0;top:539.93px;font-size:15.5px;font-weight:400;color:#262a2f;line-height:22px;">Company</div>
<div class="t" style="left:890.50px;width:137px;text-align:center;transform:scaleX(0.9746);transform-origin:50% 0;top:539.93px;font-size:15.5px;font-weight:400;color:#262a2f;line-height:22px;">India</div>
<svg style="position:absolute;left:1179.30px;top:540.10px;" width="40" height="40" viewBox="0 0 40 40"><circle cx="19" cy="19" r="18" fill="#fff" stroke="#c6c6c6" stroke-width="1.3"/><path d="M12.2 18.9 L17.4 24.3 L27.4 14.2" stroke="#3ddc91" stroke-width="4.1" fill="none" stroke-linecap="round" stroke-linejoin="miter"/></svg>
<svg style="position:absolute;left:1247.60px;top:540.10px;" width="40" height="40" viewBox="0 0 40 40"><circle cx="19" cy="19" r="18" fill="#fff" stroke="#c6c6c6" stroke-width="1.3"/><path d="M12.2 18.9 L17.4 24.3 L27.4 14.2" stroke="#3ddc91" stroke-width="4.1" fill="none" stroke-linecap="round" stroke-linejoin="miter"/></svg>
<svg style="position:absolute;left:1384.40px;top:539.30px;" width="40" height="40" viewBox="0 0 40 40"><rect x="1.3" y="0.9" width="37.0" height="36.9" rx="7.5" fill="none" stroke="#acacac" stroke-width="1.6" stroke-dasharray="4.1 2.1" stroke-dashoffset="1"/></svg>
<div style="position:absolute;left:23.00px;top:593.00px;width:16px;height:16px;box-sizing:border-box;border:1.2px solid #adb5bd;border-radius:4px;background:#fff"></div>
<div class="t" style="left:74.30px;transform:scaleX(0.8558);transform-origin:0 0;top:589.93px;font-size:15.5px;font-weight:400;color:#4a9ae0;line-height:22px;">ACCENTURE BUILDING MATERIALS</div>
<div class="t" style="left:370.80px;width:109px;text-align:center;transform:scaleX(1.0289);transform-origin:50% 0;top:590.93px;font-size:15.5px;font-weight:400;color:#262a2f;line-height:22px;">Not Started</div>
<div class="t" style="left:479.40px;width:137px;text-align:center;transform:scaleX(0.9346);transform-origin:50% 0;top:590.93px;font-size:15.5px;font-weight:400;color:#262a2f;line-height:22px;">28 Oct, 2021</div>
<div class="t" style="left:616.00px;width:137px;text-align:center;transform:scaleX(0.9100);transform-origin:50% 0;top:590.93px;font-size:15.5px;font-weight:400;color:#262a2f;line-height:22px;">Ethixbase User</div>
<div class="t" style="left:753.00px;width:137px;text-align:center;transform:scaleX(0.9420);transform-origin:50% 0;top:590.93px;font-size:15.5px;font-weight:400;color:#262a2f;line-height:22px;">Company</div>
<div class="t" style="left:890.50px;width:137px;text-align:center;transform:scaleX(0.9700);transform-origin:50% 0;top:590.93px;font-size:15.5px;font-weight:400;color:#262a2f;line-height:22px;">United Arab</div>
<div class="t" style="left:890.50px;width:137px;text-align:center;transform:scaleX(0.9192);transform-origin:50% 0;top:612.93px;font-size:15.5px;font-weight:400;color:#262a2f;line-height:22px;">Emirates</div>
<svg style="position:absolute;left:1180.30px;top:589.60px;" width="38" height="37" viewBox="0 0 38 37"><path d="M19 2.2 L37.1 35.6 H0.9 Z" fill="#d64352" stroke="#d64352" stroke-width="2.2" stroke-linejoin="round"/><rect x="16.9" y="10" width="4.1" height="16.8" fill="#fff"/><rect x="16.9" y="29" width="4.1" height="3.5" fill="#fff"/></svg>
<svg style="position:absolute;left:1248.60px;top:589.60px;" width="38" height="37" viewBox="0 0 38 37"><path d="M19 2.2 L37.1 35.6 H0.9 Z" fill="#d64352" stroke="#d64352" stroke-width="2.2" stroke-linejoin="round"/><rect x="16.9" y="10" width="4.1" height="16.8" fill="#fff"/><rect x="16.9" y="29" width="4.1" height="3.5" fill="#fff"/></svg>
<svg style="position:absolute;left:1316.20px;top:590.60px;" width="39" height="39" viewBox="0 0 39 39"><rect x="0.8" y="0.8" width="36.6" height="36.6" rx="7.5" fill="#fff" stroke="#d2d2d2" stroke-width="1.5"/><g transform="translate(-0.8 -0.3)"><path d="M10.6 12.8 A11.6 11.6 0 1 0 19.6 7.8 V12.5" stroke="#b3b0f7" stroke-width="1.4" fill="none"/><path d="M13.2 13.6 L20.7 19.0 Q20.3 21.3 18.5 20.7 Z" fill="#aaa6f6"/></g></svg>
<svg style="position:absolute;left:1384.40px;top:590.30px;" width="40" height="40" viewBox="0 0 40 40"><rect x="1.3" y="0.9" width="37.0" height="36.9" rx="7.5" fill="none" stroke="#acacac" stroke-width="1.6" stroke-dasharray="4.1 2.1" stroke-dashoffset="1"/></svg>
<div style="position:absolute;left:23.00px;top:647.00px;width:16px;height:16px;box-sizing:border-box;border:1.2px solid #adb5bd;border-radius:4px;background:#fff"></div>
<div class="t" style="left:74.30px;transform:scaleX(0.9675);transform-origin:0 0;top:643.93px;font-size:15.5px;font-weight:400;color:#4a9ae0;line-height:22px;">Dolby Digital Studios</div>
<div class="t" style="left:370.80px;width:109px;text-align:center;transform:scaleX(1.0289);transform-origin:50% 0;top:644.93px;font-size:15.5px;font-weight:400;color:#262a2f;line-height:22px;">Not Started</div>
<div class="t" style="left:479.40px;width:137px;text-align:center;transform:scaleX(0.9233);transform-origin:50% 0;top:644.93px;font-size:15.5px;font-weight:400;color:#262a2f;line-height:22px;">26 Oct, 2021</div>
<div class="t" style="left:616.00px;width:137px;text-align:center;transform:scaleX(0.9100);transform-origin:50% 0;top:644.93px;font-size:15.5px;font-weight:400;color:#262a2f;line-height:22px;">Ethixbase User</div>
<div class="t" style="left:753.00px;width:137px;text-align:center;transform:scaleX(0.9420);transform-origin:50% 0;top:644.93px;font-size:15.5px;font-weight:400;color:#262a2f;line-height:22px;">Company</div>
<div class="t" style="left:890.50px;width:137px;text-align:center;transform:scaleX(0.9359);transform-origin:50% 0;top:644.93px;font-size:15.5px;font-weight:400;color:#262a2f;line-height:22px;">United States</div>
<div class="t" style="left:1033.70px;transform:scaleX(0.9148);transform-origin:0 0;top:644.93px;font-size:15.5px;font-weight:400;color:#212529;line-height:22px;">Weak : <b>0</b></div>
<svg style="position:absolute;left:1179.30px;top:645.10px;" width="40" height="40" viewBox="0 0 40 40"><circle cx="19" cy="19" r="18" fill="#fff" stroke="#c6c6c6" stroke-width="1.3"/><path d="M12.2 18.9 L17.4 24.3 L27.4 14.2" stroke="#3ddc91" stroke-width="4.1" fill="none" stroke-linecap="round" stroke-linejoin="miter"/></svg>
<svg style="position:absolute;left:1248.60px;top:643.60px;" width="38" height="37" viewBox="0 0 38 37"><path d="M19 2.2 L37.1 35.6 H0.9 Z" fill="#d64352" stroke="#d64352" stroke-width="2.2" stroke-linejoin="round"/><rect x="16.9" y="10" width="4.1" height="16.8" fill="#fff"/><rect x="16.9" y="29" width="4.1" height="3.5" fill="#fff"/></svg>
<svg style="position:absolute;left:1384.40px;top:644.30px;" width="40" height="40" viewBox="0 0 40 40"><rect x="1.3" y="0.9" width="37.0" height="36.9" rx="7.5" fill="none" stroke="#acacac" stroke-width="1.6" stroke-dasharray="4.1 2.1" stroke-dashoffset="1"/></svg>
<div style="position:absolute;left:23.00px;top:698.00px;width:16px;height:16px;box-sizing:border-box;border:1.2px solid #adb5bd;border-radius:4px;background:#fff"></div>
<div class="t" style="left:74.30px;transform:scaleX(0.9402);transform-origin:0 0;top:694.93px;font-size:15.5px;font-weight:400;color:#4a9ae0;line-height:22px;">Twitch Interactive, Inc.</div>
<div class="t" style="left:370.80px;width:109px;text-align:center;transform:scaleX(0.9901);transform-origin:50% 0;top:695.93px;font-size:15.5px;font-weight:400;color:#3a3f44;line-height:22px;">Never Sent</div>
<div class="t" style="left:479.40px;width:137px;text-align:center;transform:scaleX(0.9233);transform-origin:50% 0;top:695.93px;font-size:15.5px;font-weight:400;color:#262a2f;line-height:22px;">26 Oct, 2021</div>
<div class="t" style="left:616.00px;width:137px;text-align:center;transform:scaleX(0.9505);transform-origin:50% 0;top:695.93px;font-size:15.5px;font-weight:400;color:#262a2f;line-height:22px;">Nikos Estupigan</div>
<div class="t" style="left:753.00px;width:137px;text-align:center;transform:scaleX(0.9420);transform-origin:50% 0;top:695.93px;font-size:15.5px;font-weight:400;color:#262a2f;line-height:22px;">Company</div>
<div class="t" style="left:890.50px;width:137px;text-align:center;transform:scaleX(0.9359);transform-origin:50% 0;top:695.93px;font-size:15.5px;font-weight:400;color:#262a2f;line-height:22px;">United States</div>
<div class="t" style="left:1033.70px;transform:scaleX(0.9148);transform-origin:0 0;top:695.93px;font-size:15.5px;font-weight:400;color:#212529;line-height:22px;">Weak : <b>0</b></div>
<div class="t" style="left:1096.00px;width:68px;text-align:center;transform:scaleX(0.9589);transform-origin:50% 0;top:695.93px;font-size:15.5px;font-weight:400;color:#212529;line-height:22px;">Strong :</div>
<div class="t" style="left:1096.30px;width:68px;text-align:center;transform:scaleX(0.9595);transform-origin:50% 0;top:717.93px;font-size:15.5px;font-weight:700;color:#212529;line-height:22px;"><b>13</b></div>
<svg style="position:absolute;left:1179.30px;top:696.10px;" width="40" height="40" viewBox="0 0 40 40"><circle cx="19" cy="19" r="18" fill="#fff" stroke="#c6c6c6" stroke-width="1.3"/><path d="M12.2 18.9 L17.4 24.3 L27.4 14.2" stroke="#3ddc91" stroke-width="4.1" fill="none" stroke-linecap="round" stroke-linejoin="miter"/></svg>
<svg style="position:absolute;left:1248.60px;top:694.60px;" width="38" height="37" viewBox="0 0 38 37"><path d="M19 2.2 L37.1 35.6 H0.9 Z" fill="#d64352" stroke="#d64352" stroke-width="2.2" stroke-linejoin="round"/><rect x="16.9" y="10" width="4.1" height="16.8" fill="#fff"/><rect x="16.9" y="29" width="4.1" height="3.5" fill="#fff"/></svg>
<svg style="position:absolute;left:1316.20px;top:695.60px;" width="39" height="39" viewBox="0 0 39 39"><rect x="0.8" y="0.8" width="36.6" height="36.6" rx="7.5" fill="#fff" stroke="#d2d2d2" stroke-width="1.5"/><g transform="translate(-0.8 -0.3)"><path d="M10.6 12.8 A11.6 11.6 0 1 0 19.6 7.8 V12.5" stroke="#b3b0f7" stroke-width="1.4" fill="none"/><path d="M13.2 13.6 L20.7 19.0 Q20.3 21.3 18.5 20.7 Z" fill="#aaa6f6"/></g></svg>
<svg style="position:absolute;left:1384.40px;top:695.30px;" width="40" height="40" viewBox="0 0 40 40"><rect x="1.3" y="0.9" width="37.0" height="36.9" rx="7.5" fill="none" stroke="#acacac" stroke-width="1.6" stroke-dasharray="4.1 2.1" stroke-dashoffset="1"/></svg>
<div style="position:absolute;left:23.00px;top:752.00px;width:16px;height:16px;box-sizing:border-box;border:1.2px solid #adb5bd;border-radius:4px;background:#fff"></div>
<div class="t" style="left:74.30px;transform:scaleX(0.8507);transform-origin:0 0;top:748.93px;font-size:15.5px;font-weight:400;color:#4a9ae0;line-height:22px;">TROPAS DE PREVENCION</div>
<div class="t" style="left:370.80px;width:109px;text-align:center;transform:scaleX(1.0289);transform-origin:50% 0;top:749.93px;font-size:15.5px;font-weight:400;color:#262a2f;line-height:22px;">Not Started</div>
<div class="t" style="left:479.40px;width:137px;text-align:center;transform:scaleX(0.9233);transform-origin:50% 0;top:749.93px;font-size:15.5px;font-weight:400;color:#262a2f;line-height:22px;">25 Oct, 2021</div>
<div class="t" style="left:616.00px;width:137px;text-align:center;transform:scaleX(0.9100);transform-origin:50% 0;top:749.93px;font-size:15.5px;font-weight:400;color:#262a2f;line-height:22px;">Ethixbase User</div>
<div class="t" style="left:753.00px;width:137px;text-align:center;transform:scaleX(0.9420);transform-origin:50% 0;top:749.93px;font-size:15.5px;font-weight:400;color:#262a2f;line-height:22px;">Company</div>
<div class="t" style="left:890.50px;width:137px;text-align:center;transform:scaleX(0.8962);transform-origin:50% 0;top:749.93px;font-size:15.5px;font-weight:400;color:#262a2f;line-height:22px;">Cuba</div>
<svg style="position:absolute;left:1180.30px;top:748.60px;" width="38" height="37" viewBox="0 0 38 37"><path d="M19 2.2 L37.1 35.6 H0.9 Z" fill="#d64352" stroke="#d64352" stroke-width="2.2" stroke-linejoin="round"/><rect x="16.9" y="10" width="4.1" height="16.8" fill="#fff"/><rect x="16.9" y="29" width="4.1" height="3.5" fill="#fff"/></svg>
<svg style="position:absolute;left:1248.60px;top:748.60px;" width="38" height="37" viewBox="0 0 38 37"><path d="M19 2.2 L37.1 35.6 H0.9 Z" fill="#d64352" stroke="#d64352" stroke-width="2.2" stroke-linejoin="round"/><rect x="16.9" y="10" width="4.1" height="16.8" fill="#fff"/><rect x="16.9" y="29" width="4.1" height="3.5" fill="#fff"/></svg>
<svg style="position:absolute;left:1384.40px;top:749.30px;" width="40" height="40" viewBox="0 0 40 40"><rect x="1.3" y="0.9" width="37.0" height="36.9" rx="7.5" fill="none" stroke="#acacac" stroke-width="1.6" stroke-dasharray="4.1 2.1" stroke-dashoffset="1"/></svg>
<div style="position:absolute;left:1438.00px;top:0.00px;width:1px;height:772px;background:#e1e4e8"></div>
<div style="position:absolute;left:1439.00px;top:0.00px;width:10px;height:772px;background:#f4f4f4"></div>
<div style="position:absolute;left:1439.00px;top:0.00px;width:10px;height:222px;background:linear-gradient(to right,#d9dadc 0,#e4e5e7 2px,#eeeff1 4px,#eceef0 7px,#d7d8da 10px);box-shadow:inset 0 -3px 3px -2px rgba(0,0,0,0.08), inset 0 3px 3px -2px rgba(0,0,0,0.06)"></div>
</div>
<div style="position:absolute;left:798px;top:1022px;width:27px;height:31px;background:#f7f8fa;border-radius:4px"></div>
<div style="position:absolute;left:1100px;top:1022px;width:27px;height:31px;background:#f7f8fa;border-radius:4px"></div>
<svg style="position:absolute;left:805px;top:1031px;" width="12" height="14" viewBox="0 0 12 14"><path d="M8.6 1.8 L3.6 7 L8.6 12.2" stroke="#6f7479" stroke-width="2.2" fill="none" stroke-linecap="round" stroke-linejoin="round"/></svg>
<svg style="position:absolute;left:1108px;top:1031px;" width="12" height="14" viewBox="0 0 12 14"><path d="M3.4 1.8 L8.4 7 L3.4 12.2" stroke="#212529" stroke-width="2.4" fill="none" stroke-linecap="round" stroke-linejoin="round"/></svg>
<div class="t" style="left:833.40px;transform:scaleX(1.0267);transform-origin:0 0;top:1025.99px;font-size:15.6px;font-weight:400;color:#212529;line-height:22px;">Showing Result From <b>1</b> to <b>50</b> of <b>311</b></div>
</body></html>
